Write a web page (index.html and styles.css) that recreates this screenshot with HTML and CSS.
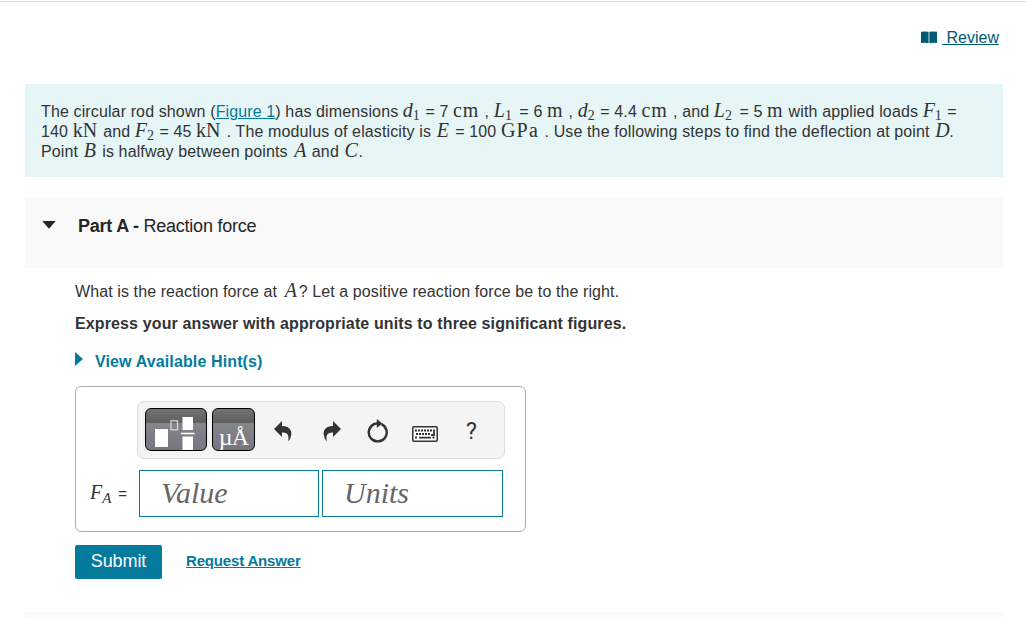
FILE: index.html
```
<!DOCTYPE html>
<html lang="en">
<head>
<meta charset="utf-8">
<title>Reaction force</title>
<link rel="stylesheet" href="styles.css">
</head>
<body>
<header class="topbar">
  <svg class="book" width="16" height="13" viewBox="0 0 16 13"><path d="M0 .8Q4 0 7.600 .8V12.200Q4 11.500 0 12ZM8.400 .8Q12 0 16 .8V12Q12 11.500 8.400 12.200Z" fill="#005a70"/></svg>
  <a class="review" href="#">&nbsp;Review</a>
</header>
<section class="problem">
  <div class="line">The circular rod shown (<a href="#">Figure 1</a>) has dimensions <span class="m w-d"><i>d</i><sub>1</sub></span> = 7 <span class="m w-cm">cm</span> , <span class="m w-l"><i>L</i><sub>1</sub></span> = 6 <span class="m w-m">m</span> , <span class="m w-d"><i>d</i><sub>2</sub></span> = 4.4 <span class="m w-cm">cm</span> , and <span class="m w-l"><i>L</i><sub>2</sub></span> = 5 <span class="m w-m">m</span> with applied loads <span class="m w-f"><i>F</i><sub>1</sub></span> =</div>
  <div class="line">140 <span class="m w-kn">kN</span> and <span class="m w-f"><i>F</i><sub>2</sub></span> = 45 <span class="m w-kn">kN</span> . The modulus of elasticity is <span class="m w-e"><i>E</i></span> = 100 <span class="m w-gpa">GPa</span> . Use the following steps to find the deflection at point <span class="m w-e"><i>D</i></span>.</div>
  <div class="line">Point <span class="m w-e"><i>B</i></span> is halfway between points <span class="m w-a"><i>A</i></span> and <span class="m w-e"><i>C</i></span>.</div>
</section>
<section class="part-head">
  <svg width="14" height="8" viewBox="0 0 14 8"><path d="M.3 0H13.7L7 7.8Z" fill="#252525"/></svg>
  <h2><b>Part A -</b> Reaction force</h2>
</section>
<main class="part">
  <p class="question">What is the reaction force at <span class="m w-a"><i>A</i></span>? Let a positive reaction force be to the right.</p>
  <p class="express">Express your answer with appropriate units to three significant figures.</p>
  <a class="hints"><svg width="8" height="14" viewBox="0 0 8 14"><path d="M0 0L8 7L0 14Z" fill="#047a9c"/></svg><span>View Available Hint(s)</span></a>
  <div class="answer">
    <div class="toolbar">
      <button class="key templates"><svg width="60" height="41" viewBox="0 0 60 41"><g fill="#fff"><path d="M9 20h13v18H9zM36.500 8h10.500v13H36.500zM36.500 27.500h10.500v13.500H36.500zM35 23.700h13.500v1.500H35z"/></g><rect x="25" y="11.800" width="6.500" height="9" fill="none" stroke="#ddd" stroke-width="1.200"/></svg></button>
      <button class="key symbols">µÅ</button>
      <svg class="undo" width="18" height="21" viewBox="0 0 18 21"><path d="M0 8L8 0V5C15 5 18 9 17.200 14Q16.800 18 14 20.500C15.500 15 14 11 8 11.500V16Z" fill="#333"/></svg>
      <svg class="redo" width="18" height="21" viewBox="0 0 18 21"><path d="M18 8L10 0V5C3 5 0 9 .8 14Q1.200 18 4 20.500C2.500 15 4 11 10 11.500V16Z" fill="#333"/></svg>
      <svg class="reset" width="21" height="24" viewBox="0 0 21 24"><path d="M7 5.200A9 9 0 1 0 14.500 5.200" fill="none" stroke="#333" stroke-width="2.400"/><path d="M9.800 0L15.300 4.600L9.800 9V5.700L6 6.500V4L9.800 3.200Z" fill="#333"/></svg>
      <svg class="keyboard" width="26" height="16" viewBox="0 0 26 16"><rect x=".8" y=".8" width="24.400" height="14.400" rx="1" fill="#fff" stroke="#333" stroke-width="1.500"/><path d="M3 4.500H20M4 8H19M3 11.500H5.500M20.500 11.500H23" stroke="#333" stroke-width="2" stroke-dasharray="2 1"/><path d="M7 11.700H19M22 3.500V9H19" fill="none" stroke="#333" stroke-width="1.800"/></svg>
      <span class="help">?</span>
    </div>
    <div class="fields">
      <span class="label"><span class="fa"><i>F</i><sub>A</sub></span> =</span>
      <div class="field">Value</div>
      <div class="field units">Units</div>
    </div>
  </div>
  <div class="actions"><button class="submit">Submit</button><a class="request" href="#">Request Answer</a></div>
</main>
<div class="next-part"></div>
</body>
</html>
```
FILE: styles.css
```
* { box-sizing: border-box; }
body { margin: 1px 0 0; height: 616px; overflow: hidden; background: #fff; color: #333; font: 16px/20px "Liberation Sans", Arial, sans-serif; display: flex; flex-direction: column; border-top: 1px solid #ddd; }
.topbar { height: 82px; flex: none; display: flex; justify-content: flex-end; padding: 26px 27px 0 0; gap: 5px; }
.book { margin-top: 3px; }
.review { color: #005a70; }
.problem { height: 93px; flex: none; margin: 0 23px 0 25px; padding: 17px 16px; background: #e6f6f7; letter-spacing: .125px; }
.problem a { color: #047a9c; }
.line { height: 20px; white-space: nowrap; }
.m { display: inline-block; height: 18px; line-height: 18px; font-family: "Liberation Serif", "Times New Roman", serif; font-size: 20px; letter-spacing: 0; white-space: nowrap; vertical-align: baseline; }
.m sub { font-size: 14px; line-height: 0; vertical-align: -3px; }
.w-d { width: 18px; }
.w-l { width: 21px; }
.w-f { width: 20px; }
.w-cm { width: 27px; letter-spacing: .8px; }
.w-m { width: 17px; }
.w-kn { width: 26px; }
.w-gpa { width: 39px; letter-spacing: 1.2px; }
.w-e { width: 15px; padding-left: 1px; }
.w-a { width: 15px; padding-left: 2px; }
.part-head { height: 71px; flex: none; margin: 20px 23px 0 25px; padding: 19px 17px; background: #f9f9f9; display: flex; color: #252525; }
.part-head svg { margin-top: 5px; }
h2 { margin: 0 0 0 22px; font-size: 18px; line-height: 20px; font-weight: normal; letter-spacing: -.24px; }
.part { margin-left: 75px; height: 344px; flex: none; display: flex; flex-direction: column; align-items: flex-start; padding-top: 13px; letter-spacing: .125px; }
.question, .express { margin: 0 0 12px; height: 20px; white-space: nowrap; }
.question { margin-bottom: 13px; }
.question .w-a { width: 17px; padding-left: 3px; }
.question { letter-spacing: .1px; }
.express { font-weight: bold; }
.hints { display: flex; gap: 12px; margin-top: 6px; height: 20px; color: #047a9c; font-weight: bold; }
.answer { width: 451px; height: 146px; margin-top: 14px; border: 1px solid #aaa; border-radius: 6px; padding: 14px 0 0 14px; letter-spacing: 0; }
.toolbar { width: 368px; height: 58px; margin-left: 47px; border: 1px solid #ddd; border-radius: 7px; background: #f4f4f4; display: flex; align-items: flex-start; padding: 6px 0 0 7px; }
.key { flex: none; height: 43px; padding: 0; border: 1px solid #000; border-radius: 6px; background: linear-gradient(#727272, #606060 34%, #85858c 35%, #77767f); color: #fff; overflow: hidden; }
.key svg { display: block; }
.templates { width: 62px; }
.symbols { width: 43px; margin-left: 5px; font: 24px/57px "Liberation Serif", serif; letter-spacing: -.8px; }
.undo { margin: 13px 0 0 19px; }
.redo { margin: 13px 0 0 31px; }
.reset { margin: 11px 0 0 26px; }
.keyboard { margin: 18px 0 0 24px; }
.help { margin: 11px 0 0 28px; font: 23px/26px Roboto, sans-serif; }
.fields { display: flex; margin-top: 11px; }
.label { width: 49px; padding-top: 13px; font-size: 15px; white-space: nowrap; }
.fa { display: inline-block; width: 24px; font: 20px/18px "Liberation Serif", serif; }
.fa sub { font-size: 15px; font-style: italic; line-height: 0; vertical-align: -4px; }
.field { width: 180px; height: 47px; border: 1px solid #047a9c; padding: 0 0 0 21px; color: #666; font: italic 30px/43px "Liberation Serif", serif; }
.units { width: 181px; margin-left: 3px; }
.actions { display: flex; margin-top: 13px; letter-spacing: 0; }
.submit { width: 87px; height: 34px; border: 0; border-radius: 2px; padding: 0 0 2px; background: #047a9c; color: #fff; font: 18px/32px "Liberation Sans", sans-serif; letter-spacing: -.1px; }
.request { margin: 6px 0 0 24px; color: #047a9c; font-size: 15px; font-weight: bold; letter-spacing: -.17px; }
.next-part { height: 6px; flex: none; margin: 0 23px 0 25px; background: #f9f9f9; }
```
